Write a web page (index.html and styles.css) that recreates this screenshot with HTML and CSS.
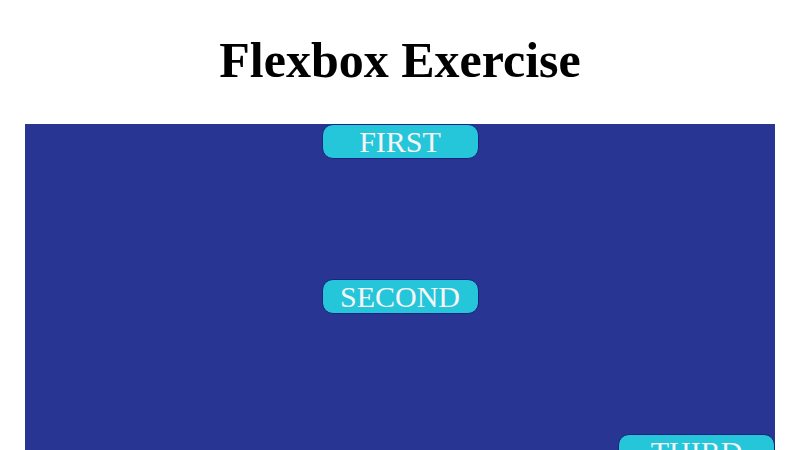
FILE: index.html
```html
<!DOCTYPE html>
<html lang="en">
<head>
    <meta charset="UTF-8">
    <meta name="viewport" content="width=device-width, initial-scale=1.0">
    <title>Flexbox Exercise</title>
    <link rel="stylesheet" href="styles.css">
</head>
<body>
    <h1>Flexbox Exercise</h1>

    <div class="container">
        <div class="box first">FIRST</div>
        <div class="box second">SECOND</div>
        <div class="box third">THIRD</div>
    </div>
</body>
</html>
```

FILE: styles.css
```css
body {
    font-family: "Liberation Serif", "Times New Roman", serif;
    margin: 0;
    padding: 0 25px;
}
h1 {
    text-align: center;
    font-size: 50px;
    margin: 31px 0 35px;
}
.container {
    background: #283593;
    display: flex;
    flex-direction: column;
    gap: 120px;
    height: 600px;
}
.box {
    width: 155px;
    height: 33px;
    line-height: 33px;
    background: #26c6da;
    color: #f5f5f5;
    font-size: 30px;
    text-align: center;
    border: 1px solid #1a237e;
    border-radius: 11px;
}
.first,
.second {
    align-self: center;
}
.third {
    align-self: flex-end;
}
```
